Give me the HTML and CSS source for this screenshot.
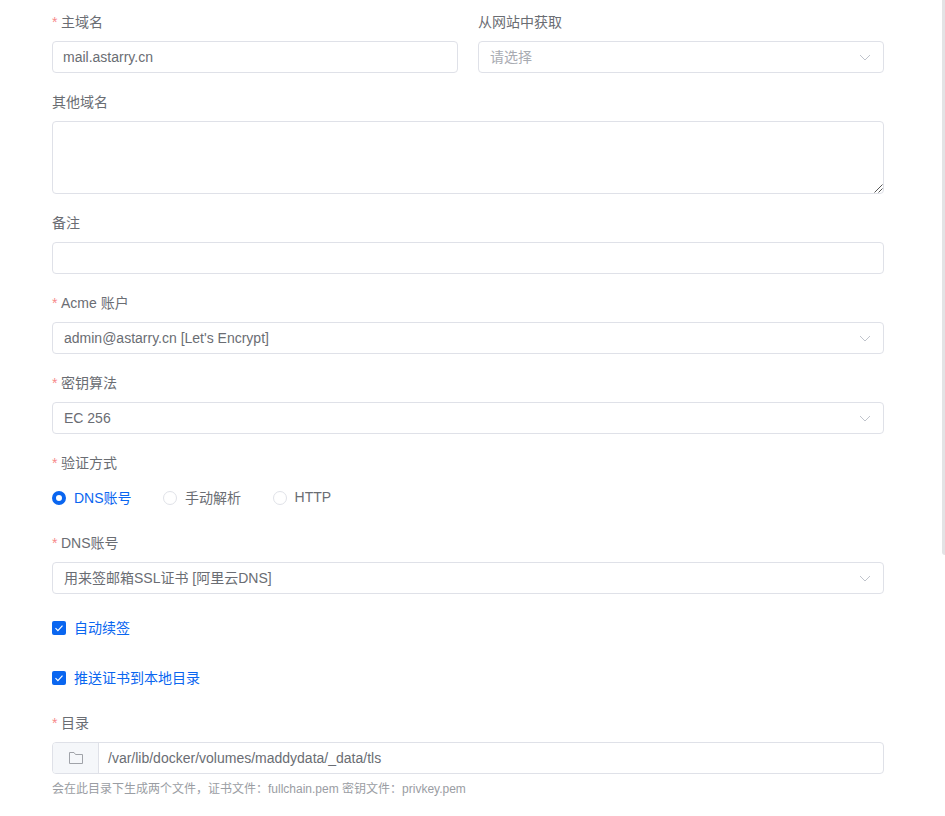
FILE: index.html
```html
<!DOCTYPE html>
<html lang="zh-CN">
<head>
    <meta charset="UTF-8">
    <title>证书申请</title>
    <link rel="stylesheet" href="styles.css">
</head>
<body>
    <div class="scroll-thumb"></div>
    <form class="cert-form">
        <div class="form-row">
            <div class="form-item">
                <div class="form-label required">主域名</div>
                <div class="control text-value">mail.astarry.cn</div>
            </div>
            <div class="form-item">
                <div class="form-label">从网站中获取</div>
                <div class="control select">
                    <span class="placeholder">请选择</span>
                    <svg class="arrow" viewBox="0 0 12 7"><path d="M1 1l5 5 5-5"/></svg>
                </div>
            </div>
        </div>
        <div class="form-item">
            <div class="form-label">其他域名</div>
            <div class="control textarea">
                <svg class="resizer" viewBox="0 0 9 9"><path d="M8.5 0.5l-8 8M8.5 4.5l-4 4"/></svg>
            </div>
        </div>
        <div class="form-item">
            <div class="form-label">备注</div>
            <div class="control"></div>
        </div>
        <div class="form-item">
            <div class="form-label required">Acme 账户</div>
            <div class="control select">
                <span>admin@astarry.cn [Let's Encrypt]</span>
                <svg class="arrow" viewBox="0 0 12 7"><path d="M1 1l5 5 5-5"/></svg>
            </div>
        </div>
        <div class="form-item">
            <div class="form-label required">密钥算法</div>
            <div class="control select">
                <span>EC 256</span>
                <svg class="arrow" viewBox="0 0 12 7"><path d="M1 1l5 5 5-5"/></svg>
            </div>
        </div>
        <div class="form-item">
            <div class="form-label required">验证方式</div>
            <div class="radio-group">
                <label class="radio checked"><span class="radio-dot"></span>DNS账号</label>
                <label class="radio"><span class="radio-dot"></span>手动解析</label>
                <label class="radio"><span class="radio-dot"></span>HTTP</label>
            </div>
        </div>
        <div class="form-item">
            <div class="form-label required">DNS账号</div>
            <div class="control select">
                <span>用来签邮箱SSL证书 [阿里云DNS]</span>
                <svg class="arrow" viewBox="0 0 12 7"><path d="M1 1l5 5 5-5"/></svg>
            </div>
        </div>
        <div class="form-item">
            <label class="checkbox">
                <span class="check-box"><svg viewBox="0 0 14 14"><path d="M3.5 7.2l2.4 2.4 4.6-5"/></svg></span>自动续签
            </label>
        </div>
        <div class="form-item">
            <label class="checkbox">
                <span class="check-box"><svg viewBox="0 0 14 14"><path d="M3.5 7.2l2.4 2.4 4.6-5"/></svg></span>推送证书到本地目录
            </label>
        </div>
        <div class="form-item">
            <div class="form-label required">目录</div>
            <div class="input-group">
                <div class="prepend">
                    <svg class="folder" viewBox="0 0 14 12"><path d="M0.5 11.5v-11h4.5l1.5 2h7v9z"/></svg>
                </div>
                <div class="group-input">/var/lib/docker/volumes/maddydata/_data/tls</div>
            </div>
            <div class="hint">会在此目录下生成两个文件，证书文件：fullchain.pem 密钥文件：privkey.pem</div>
        </div>
    </form>
</body>
</html>
```

FILE: styles.css
```css
html, body {
    margin: 0;
    height: 100%;
    overflow: hidden;
    background-color: #fff;
}
body {
    font-family: "Liberation Sans", "Noto Sans CJK SC", sans-serif;
    font-size: 14px;
    color: #6a6d73;
}
.scroll-thumb {
    position: absolute;
    top: 0;
    right: 0;
    width: 3px;
    height: 555px;
    background-color: #e3e3e5;
    border-bottom-left-radius: 3px;
}
.cert-form {
    width: 832px;
    padding: 11px 0 0 52px;
}
.form-row {
    display: grid;
    grid-template-columns: 1fr 1fr;
    gap: 20px;
}
.form-item {
    margin-bottom: 18px;
}
.form-label {
    line-height: 22px;
    margin-bottom: 8px;
}
.form-label.required::before {
    content: "*";
    color: #f78989;
    margin-right: 3.5px;
}
.control {
    box-sizing: border-box;
    height: 32px;
    line-height: 30px;
    padding: 0 11px;
    border: 1px solid #dfe1e8;
    border-radius: 4px;
}
.text-value {
    padding: 0 10px;
}
.select {
    display: flex;
    justify-content: space-between;
    align-items: center;
}
.placeholder {
    color: #a8abb2;
}
.arrow {
    width: 12px;
    height: 7px;
    margin-right: 1px;
    fill: none;
    stroke: #c0c4cc;
    stroke-width: 1;
}
.textarea {
    position: relative;
    height: 73px;
}
.resizer {
    position: absolute;
    right: 0;
    bottom: 0;
    width: 9px;
    height: 9px;
    fill: none;
    stroke: #555;
    stroke-width: 1;
}
.radio-group {
    display: flex;
    gap: 31.5px;
    height: 32px;
}
.radio {
    box-sizing: border-box;
    display: flex;
    align-items: center;
    gap: 8px;
    padding-bottom: 2px;
}
.radio-dot {
    box-sizing: border-box;
    width: 14px;
    height: 14px;
    margin-top: 2px;
    border: 1px solid #e0e2e8;
    border-radius: 50%;
}
.radio.checked {
    color: #0a66f0;
}
.radio.checked .radio-dot {
    border: 4.5px solid #0a66f0;
    background-color: #fff;
}
.checkbox {
    box-sizing: border-box;
    display: flex;
    align-items: center;
    gap: 8px;
    height: 32px;
    padding-bottom: 2px;
    color: #0a66f0;
}
.check-box {
    display: block;
    width: 14px;
    height: 14px;
    margin-top: 2px;
    border-radius: 2px;
    background-color: #0a66f0;
}
.check-box svg {
    display: block;
    width: 14px;
    height: 14px;
    fill: none;
    stroke: #fff;
    stroke-width: 1.2;
}
.input-group {
    display: flex;
    height: 32px;
    box-sizing: border-box;
    border: 1px solid #dfe1e8;
    border-radius: 4px;
}
.prepend {
    display: flex;
    align-items: center;
    justify-content: center;
    width: 45px;
    background-color: #f5f7fa;
    border-right: 1px solid #dfe1e8;
    border-radius: 3px 0 0 3px;
}
.folder {
    width: 14px;
    height: 12px;
    fill: none;
    stroke: #a0a3a9;
    stroke-width: 1;
}
.group-input {
    flex: 1;
    line-height: 30px;
    padding: 0 9px;
}
.hint {
    margin-top: 6px;
    font-size: 12px;
    line-height: 18px;
    color: #9a9da3;
}
```
